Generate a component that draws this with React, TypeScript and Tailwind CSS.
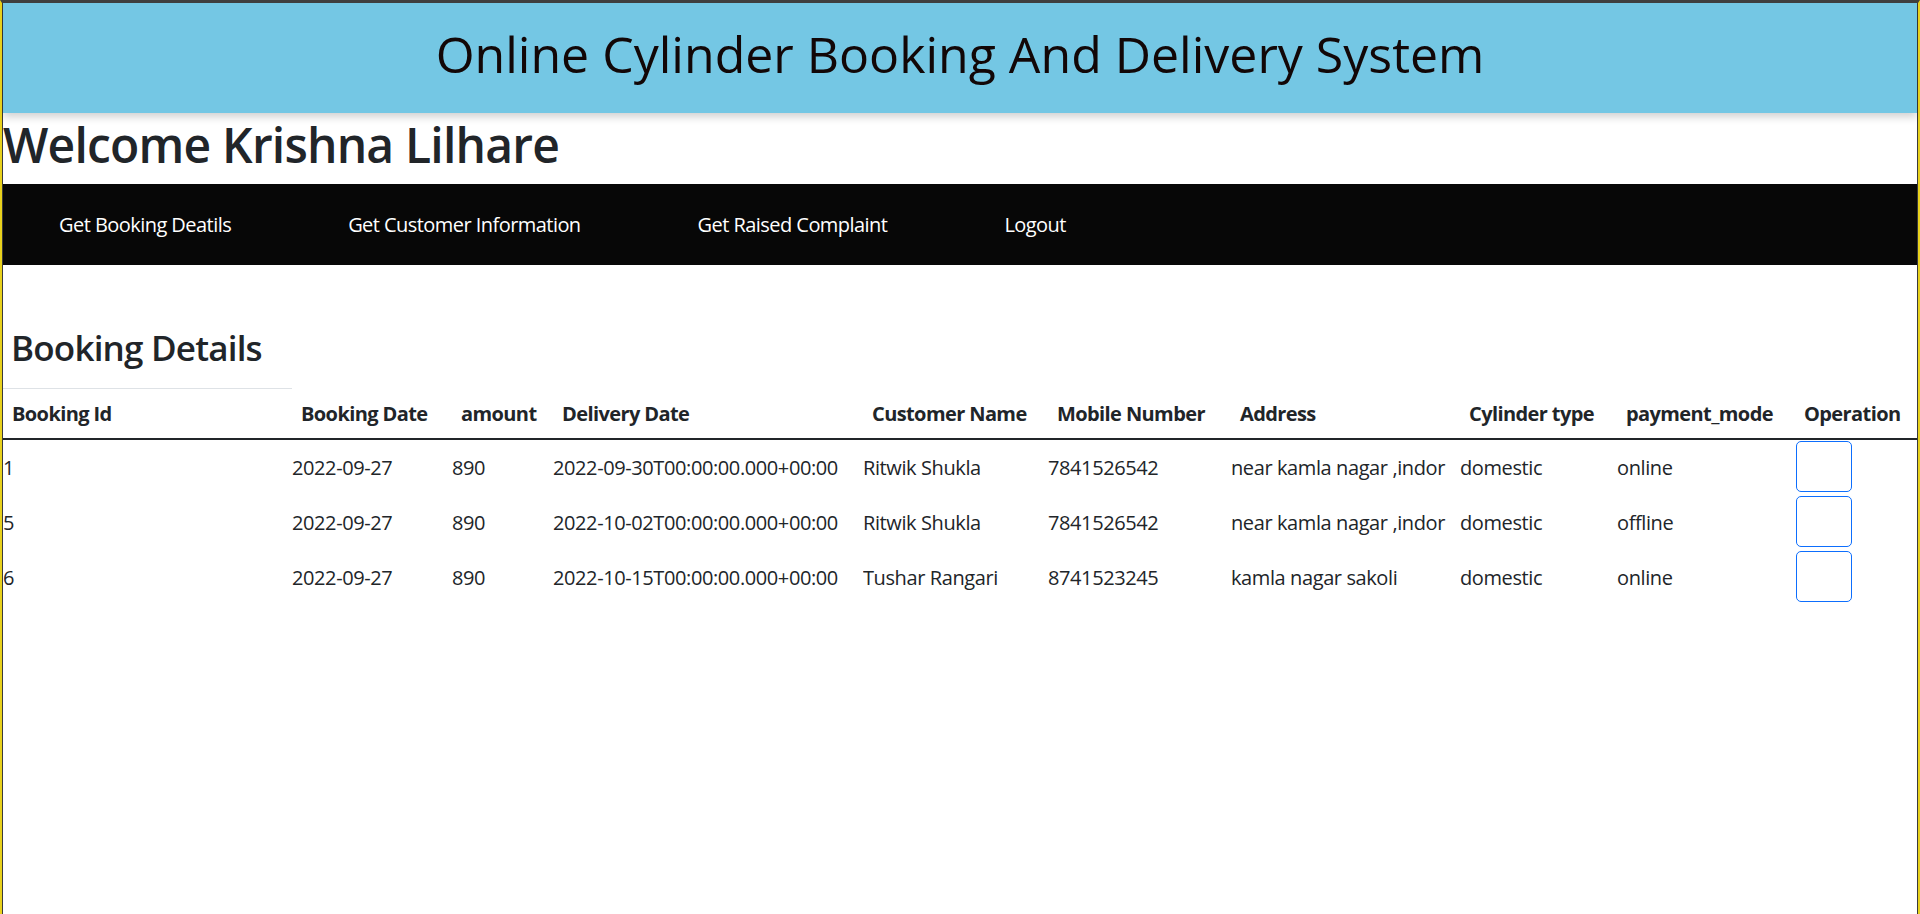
import React from "react";

type Row = {
  id: string;
  bdate: string;
  amount: string;
  ddate: string;
  name: string;
  mobile: string;
  address: string;
  type: string;
  mode: string;
};

const rows: Row[] = [
  {
    id: "1",
    bdate: "2022-09-27",
    amount: "890",
    ddate: "2022-09-30T00:00:00.000+00:00",
    name: "Ritwik Shukla",
    mobile: "7841526542",
    address: "near kamla nagar ,indor",
    type: "domestic",
    mode: "online",
  },
  {
    id: "5",
    bdate: "2022-09-27",
    amount: "890",
    ddate: "2022-10-02T00:00:00.000+00:00",
    name: "Ritwik Shukla",
    mobile: "7841526542",
    address: "near kamla nagar ,indor",
    type: "domestic",
    mode: "offline",
  },
  {
    id: "6",
    bdate: "2022-09-27",
    amount: "890",
    ddate: "2022-10-15T00:00:00.000+00:00",
    name: "Tushar Rangari",
    mobile: "8741523245",
    address: "kamla nagar sakoli",
    type: "domestic",
    mode: "online",
  },
];

const headers = [
  "Booking Id",
  "Booking Date",
  "amount",
  "Delivery Date",
  "Customer Name",
  "Mobile Number",
  "Address",
  "Cylinder type",
  "payment_mode",
  "Operation",
];

export default function App() {
  return (
    <div className="h-[914px] w-full overflow-hidden bg-white border-t-[3px] border-t-[#3f3f3f] border-l-2 border-r-2 border-l-[#e8d11c] border-r-[#e8d11c] font-['Open_Sans',sans-serif] text-[#212529]">
      <div className="h-full flex flex-col border-l border-r border-l-[#3a3a3a] border-r-[#3a3a3a]">
        <header className="relative z-10 h-[110px] shrink-0 bg-[#74c7e4] flex items-center justify-center shadow-[0_4px_8px_rgba(0,0,0,0.18)]">
          <h1 className="text-[50px] leading-none text-[#120707] pb-[8px]">
            Online Cylinder Booking And Delivery System
          </h1>
        </header>

        <div className="h-[71px] shrink-0 pt-[2px]">
          <h1 className="text-[48px] leading-[60px] font-semibold tracking-[-0.8px] whitespace-nowrap">
            Welcome Krishna Lilhare
          </h1>
        </div>

        <nav className="h-[81px] shrink-0 bg-[#070707] flex items-center pl-[56px] gap-[117px] text-white text-[20px] tracking-[-0.55px]">
          <span>Get Booking Deatils</span>
          <span>Get Customer Information</span>
          <span>Get Raised Complaint</span>
          <span>Logout</span>
        </nav>

        <div className="pt-[59px]">
          <table className="table-fixed w-[1914px] border-separate border-spacing-0 text-[20px] tracking-[-0.4px]">
            <colgroup>
              <col className="w-[289px]" />
              <col className="w-[160px]" />
              <col className="w-[101px]" />
              <col className="w-[310px]" />
              <col className="w-[185px]" />
              <col className="w-[183px]" />
              <col className="w-[229px]" />
              <col className="w-[157px]" />
              <col className="w-[178px]" />
              <col className="w-[122px]" />
            </colgroup>
            <tbody>
              <tr>
                <td className="p-0 border-b border-b-[#dee2e6] align-top">
                  <h2 className="text-[35px] leading-[48px] font-semibold tracking-[-0.8px] pl-[8px] mb-[16px] whitespace-nowrap">
                    Booking Details
                  </h2>
                </td>
                <td colSpan={9} className="p-0"></td>
              </tr>
              <tr>
                {headers.map((h) => (
                  <th
                    key={h}
                    className="h-[51px] p-0 pl-[9px] text-left font-bold tracking-[-0.6px] align-middle whitespace-nowrap overflow-hidden border-b-2 border-b-[#212529]"
                  >
                    {h}
                  </th>
                ))}
              </tr>
              {rows.map((r) => (
                <tr key={r.id}>
                  {[r.id, r.bdate, r.amount, r.ddate, r.name, r.mobile, r.address, r.type, r.mode].map(
                    (v, i) => (
                      <td
                        key={i}
                        className="h-[55px] p-0 align-middle whitespace-nowrap overflow-hidden"
                      >
                        {v}
                      </td>
                    )
                  )}
                  <td className="h-[55px] p-0 pt-[1px] align-top">
                    <button
                      type="button"
                      className="block ml-[1px] w-[56px] h-[51px] rounded-[5px] border border-[#0d6efd] bg-white"
                    ></button>
                  </td>
                </tr>
              ))}
            </tbody>
          </table>
        </div>
      </div>
    </div>
  );
}
